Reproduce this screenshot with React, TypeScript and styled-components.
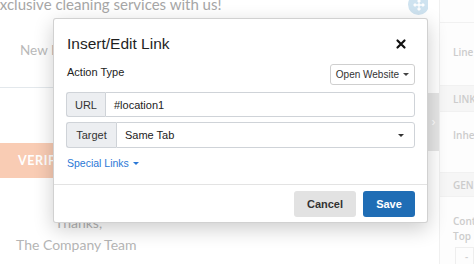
import styled, { createGlobalStyle } from "styled-components";

const GlobalStyle = createGlobalStyle`
  html, body {
    margin: 0;
    padding: 0;
    background: #ffffff;
  }
  * {
    box-sizing: border-box;
  }
`;

const Page = styled.div`
  position: relative;
  width: 474px;
  height: 264px;
  overflow: hidden;
  display: flex;
  background: #ffffff;
`;

/* faded email canvas behind the dialog */
const Canvas = styled.div`
  position: relative;
  width: 428px;
  flex: none;
  overflow: hidden;
  font-family: Lato, "Open Sans", sans-serif;
  color: #b3b3b3;
`;

const Tagline = styled.p`
  margin: -4px 0 0 -8px;
  font-size: 15px;
  line-height: 16px;
  white-space: nowrap;
  color: #a6a6a6;
`;

const HeroRow = styled.div`
  height: 76px;
  padding: 30px 0 0 20px;
  font-size: 13.5px;
  line-height: 16px;
  color: #b9b9b9;
  border-bottom: 1px solid #e3e8ec;
  white-space: nowrap;
`;

const VerifyButton = styled.div`
  margin-top: 55px;
  height: 35px;
  width: 200px;
  padding-left: 18px;
  display: flex;
  align-items: center;
  background: #f9ccb4;
  color: #ffffff;
  font-weight: 700;
  font-size: 12.5px;
  letter-spacing: 0.6px;
`;

const Signoff = styled.div<{ $indent: number; $top: number }>`
  margin-top: ${(p) => p.$top}px;
  padding-left: ${(p) => p.$indent}px;
  font-size: 14px;
  line-height: 18px;
  white-space: nowrap;
  color: #b5b5b5;
`;

const DragHandle = styled.div`
  position: absolute;
  left: 408px;
  top: -6px;
  width: 21px;
  height: 21px;
  border-radius: 50%;
  background: #cfe3f0;
  display: flex;
  align-items: center;
  justify-content: center;
`;

const TabColumn = styled.div`
  width: 12px;
  flex: none;
  padding-top: 93px;
  border-right: 1px solid #f0f0f0;
`;

const CollapseTab = styled.div`
  height: 58px;
  width: 11px;
  background: #e6e6e6;
  display: flex;
  align-items: center;
  justify-content: center;
  color: #ffffff;
  font-family: "Liberation Sans", sans-serif;
  font-size: 12px;
`;

const SidePanel = styled.div`
  flex: 1;
  background: #fdfdfd;
  font-family: "Open Sans", sans-serif;
  font-size: 10px;
  font-weight: 600;
  color: #cccccc;
  white-space: nowrap;
  overflow: hidden;
`;

const PanelRow = styled.div<{ $h: number; $pad: number; $band?: boolean; $line?: boolean }>`
  height: ${(p) => p.$h}px;
  padding: ${(p) => p.$pad}px 0 0 13px;
  line-height: 14px;
  background: ${(p) => (p.$band ? "#f6f6f6" : "transparent")};
  border-bottom: ${(p) => (p.$line ? "1px solid #f1f1f1" : "0")};
`;

const PanelInput = styled.div`
  margin: 4px 0 0 15px;
  height: 20px;
  border: 1px solid #eeeeee;
  padding: 2px 0 0 9px;
  color: #d0d0d0;
`;

/* dialog */
const Dialog = styled.div`
  position: absolute;
  left: 53px;
  top: 18px;
  width: 375px;
  height: 205px;
  background: #ffffff;
  border: 1px solid rgba(0, 0, 0, 0.18);
  border-radius: 3px;
  box-shadow: 0 6px 20px rgba(0, 0, 0, 0.2);
  display: flex;
  flex-direction: column;
  font-family: "Liberation Sans", Arial, sans-serif;
  color: #222222;
`;

const Header = styled.div`
  display: flex;
  align-items: center;
  justify-content: space-between;
  padding: 10px 20px 0 13px;
  height: 40px;
`;

const Title = styled.h4`
  margin: 0;
  font-size: 15.5px;
  font-weight: 400;
  line-height: 20px;
  color: #1f1f1f;
`;

const CloseButton = styled.button`
  border: 0;
  background: none;
  padding: 0;
  width: 12px;
  height: 12px;
  display: flex;
  cursor: pointer;
`;

const Body = styled.div`
  padding: 5px 12px 13px 12px;
  display: flex;
  flex-direction: column;
`;

const ActionRow = styled.div`
  display: flex;
  align-items: center;
  justify-content: space-between;
  height: 21px;
  margin-bottom: 7px;
`;

const Label = styled.span`
  font-size: 11px;
  padding-left: 1px;
  margin-top: -6px;
  color: #222222;
`;

const DropButton = styled.button`
  height: 21px;
  padding: 0 5px;
  border: 1px solid #cfcfcf;
  border-radius: 3px;
  background: #ffffff;
  font-family: inherit;
  font-size: 10px;
  color: #333333;
  display: flex;
  align-items: center;
  gap: 4px;
`;

const Caret = styled.span<{ $color?: string }>`
  width: 0;
  height: 0;
  border-left: 3px solid transparent;
  border-right: 3px solid transparent;
  border-top: 3px solid ${(p) => p.$color || "#444444"};
`;

const InputGroup = styled.div<{ $h: number; $gap: number }>`
  display: flex;
  height: ${(p) => p.$h}px;
  margin-bottom: ${(p) => p.$gap}px;
  font-size: 11px;
`;

const Addon = styled.span<{ $w: number }>`
  width: ${(p) => p.$w}px;
  flex: none;
  display: flex;
  align-items: center;
  justify-content: center;
  background: #eceef1;
  border: 1px solid #cfd3d8;
  border-right: 0;
  border-radius: 3px 0 0 3px;
  color: #333333;
`;

const Field = styled.div`
  flex: 1;
  display: flex;
  align-items: center;
  justify-content: space-between;
  padding: 0 10px 0 8px;
  border: 1px solid #cfd3d8;
  border-radius: 0 3px 3px 0;
  color: #222222;
`;

const LinkToggle = styled.a`
  display: flex;
  align-items: center;
  gap: 4px;
  height: 16px;
  padding-left: 1px;
  font-size: 10.5px;
  color: #2b78d6;
  text-decoration: none;
  cursor: pointer;
`;

const Footer = styled.div`
  border-top: 1px solid #e3e3e3;
  display: flex;
  justify-content: flex-end;
  gap: 7px;
  padding: 6px 12px 0 0;
`;

const Button = styled.button<{ $primary?: boolean; $w: number }>`
  width: ${(p) => p.$w}px;
  height: 26px;
  border: 0;
  border-radius: 3px;
  background: ${(p) => (p.$primary ? "#1f6db5" : "#e2e2e2")};
  color: ${(p) => (p.$primary ? "#ffffff" : "#333333")};
  font-family: inherit;
  font-size: 11px;
  font-weight: 700;
  cursor: pointer;
`;

export default function App() {
  return (
    <>
      <GlobalStyle />
      <Page>
        <Canvas>
          <Tagline>exclusive cleaning services with us!</Tagline>
          <HeroRow>New Exclusive Offers</HeroRow>
          <VerifyButton>VERIFY</VerifyButton>
          <Signoff $indent={55} $top={36}>Thanks,</Signoff>
          <Signoff $indent={16} $top={4}>The Company Team</Signoff>
          <DragHandle>
            <svg width="12" height="12" viewBox="0 0 12 12" fill="none" stroke="#ffffff" strokeWidth="1.3">
              <path d="M6 1v10M1 6h10M4.5 2.5L6 1l1.5 1.5M4.5 9.5L6 11l1.5-1.5M2.5 4.5L1 6l1.5 1.5M9.5 4.5L11 6l-1.5 1.5" />
            </svg>
          </DragHandle>
        </Canvas>
        <TabColumn>
          <CollapseTab>›</CollapseTab>
        </TabColumn>
        <SidePanel>
          <PanelRow $h={23} $pad={0} $line />
          <PanelRow $h={63} $pad={22} $line>Line Height</PanelRow>
          <PanelRow $h={26} $pad={6} $band $line>LINK</PanelRow>
          <PanelRow $h={61} $pad={16} $line>Inherit</PanelRow>
          <PanelRow $h={24} $pad={5} $band $line>GENERAL</PanelRow>
          <PanelRow $h={32} $pad={17}>Container</PanelRow>
          <PanelRow $h={14} $pad={0}>Top</PanelRow>
          <PanelInput>-</PanelInput>
        </SidePanel>

        <Dialog>
          <Header>
            <Title>Insert/Edit Link</Title>
            <CloseButton aria-label="Close">
              <svg width="12" height="12" viewBox="0 0 12 12">
                <path d="M2.5 2.5l7 7M9.5 2.5l-7 7" stroke="#111111" strokeWidth="2.2" strokeLinecap="round" />
              </svg>
            </CloseButton>
          </Header>
          <Body>
            <ActionRow>
              <Label>Action Type</Label>
              <DropButton>
                Open Website <Caret />
              </DropButton>
            </ActionRow>
            <InputGroup $h={25} $gap={5}>
              <Addon $w={39}>URL</Addon>
              <Field>#location1</Field>
            </InputGroup>
            <InputGroup $h={26} $gap={7}>
              <Addon $w={50}>Target</Addon>
              <Field>
                Same Tab <Caret $color="#333333" />
              </Field>
            </InputGroup>
            <LinkToggle>
              Special Links <Caret $color="#2b78d6" />
            </LinkToggle>
          </Body>
          <Footer>
            <Button $w={62}>Cancel</Button>
            <Button $w={52} $primary>
              Save
            </Button>
          </Footer>
        </Dialog>
      </Page>
    </>
  );
}
